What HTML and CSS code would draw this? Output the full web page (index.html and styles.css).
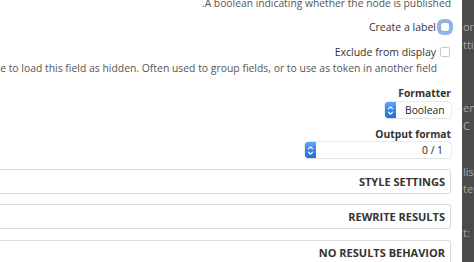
FILE: index.html
```html
<!DOCTYPE html>
<html>
<head>
<meta charset="utf-8">
<link rel="stylesheet" href="styles.css">
</head>
<body>
<div class="page">
  <div class="panel">
    <div class="desc desc-top">.A boolean indicating whether the node is published</div>
    <div class="check-row row-label">
      <span class="check-text">Create a label</span>
      <span class="checkbox focused"></span>
    </div>
    <div class="check-row row-exclude">
      <span class="check-text">Exclude from display</span>
      <span class="checkbox"></span>
    </div>
    <div class="desc desc-small">e to load this field as hidden. Often used to group fields, or to use as token in another field</div>
    <div class="field-label label-formatter">Formatter</div>
    <div class="select-row row-boolean">
      <div class="select select-short">
        <span class="select-arrow">
          <svg width="7" height="11" viewBox="0 0 7 11"><path d="M1.2 4.2 L3.5 1.8 L5.8 4.2 M1.2 6.8 L3.5 9.2 L5.8 6.8" fill="none" stroke="#fff" stroke-width="1.2"/></svg>
        </span>
        <span class="select-value">Boolean</span>
      </div>
    </div>
    <div class="field-label label-output">Output format</div>
    <div class="select-row row-output">
      <div class="select select-long">
        <span class="select-arrow">
          <svg width="7" height="11" viewBox="0 0 7 11"><path d="M1.2 4.2 L3.5 1.8 L5.8 4.2 M1.2 6.8 L3.5 9.2 L5.8 6.8" fill="none" stroke="#fff" stroke-width="1.2"/></svg>
        </span>
        <span class="select-value value-right">0 / 1</span>
      </div>
    </div>
    <div class="fieldset fs-first">STYLE SETTINGS</div>
    <div class="fieldset fs-second">REWRITE RESULTS</div>
    <div class="fieldset fs-third">NO RESULTS BEHAVIOR</div>
  </div>
  <div class="strip">
    <div class="strip-line s1">or</div>
    <div class="strip-line s2">ttin</div>
    <div class="strip-line s3">en</div>
    <div class="strip-line s4">C</div>
    <div class="strip-line s5">lis</div>
    <div class="strip-line s6">ter</div>
    <div class="strip-line s7">t:</div>
  </div>
</div>
</body>
</html>
```
FILE: styles.css
```css
html, body {
  margin: 0;
  padding: 0;
  background: #fff;
}
body {
  width: 474px;
  height: 262px;
  overflow: hidden;
  font-family: "Open Sans", "DejaVu Sans", sans-serif;
  color: #333;
}
.page {
  display: flex;
  width: 474px;
  height: 262px;
  overflow: hidden;
}
.panel {
  width: 462px;
  flex: none;
  overflow: hidden;
  padding-right: 11px;
  box-sizing: border-box;
  display: flex;
  flex-direction: column;
  align-items: flex-end;
}
.desc {
  white-space: nowrap;
  color: #555;
  text-align: right;
}
.desc-top {
  font-size: 10.3px;
  line-height: 14px;
  height: 14px;
  margin-top: -4px;
}
.check-row {
  display: flex;
  align-items: center;
  font-size: 10.5px;
  color: #333;
  white-space: nowrap;
}
.row-label {
  margin-top: 10px;
  height: 16px;
  margin-right: -1px;
}
.row-exclude {
  margin-top: 11px;
  height: 14px;
  margin-right: 1px;
}
.checkbox {
  display: inline-block;
  width: 8px;
  height: 8px;
  border: 1px solid #c8c8c8;
  border-radius: 2px;
  background: #fff;
  margin-left: 4px;
}
.checkbox.focused {
  border: 1px solid #98a8c0;
  box-shadow: 0 0 0 3px #8fb4ee;
  border-radius: 3px;
  margin-left: 4px;
  margin-right: 2px;
}
.desc-small {
  font-size: 10.4px;
  line-height: 14px;
  height: 14px;
  margin-top: 2px;
  margin-right: 14px;
}
.field-label {
  font-weight: bold;
  font-size: 10.3px;
  color: #333;
  line-height: 14px;
  height: 14px;
}
.label-formatter {
  margin-top: 11px;
}
.label-output {
  margin-top: 9px;
}
.select-row {
  display: flex;
  justify-content: flex-end;
}
.row-boolean { margin-top: 2px; }
.row-output { margin-top: 1px; }
.select {
  display: flex;
  height: 16px;
  border-radius: 3px;
  background: #fff;
  box-shadow: 0 0 0 0.5px #d8d8d8, 0 1px 1px rgba(0,0,0,0.07);
  overflow: hidden;
}
.select-short { width: 66px; }
.select-long { width: 146px; }
.select-arrow {
  width: 11px;
  flex: none;
  display: flex;
  align-items: center;
  justify-content: center;
  background: linear-gradient(#5aa3fa, #1f6fe3);
}
.select-value {
  flex: 1;
  font-size: 10.3px;
  line-height: 16px;
  color: #222;
  padding-left: 9px;
}
.value-right {
  text-align: right;
  padding-right: 8px;
}
.fieldset {
  align-self: stretch;
  margin-left: -10px;
  height: 23px;
  border: 1px solid #dcdcdc;
  border-radius: 2px;
  font-weight: bold;
  font-size: 11px;
  line-height: 23px;
  color: #333;
  text-align: right;
  padding-right: 5px;
}
.fs-first { margin-top: 11px; }
.fs-second { margin-top: 10px; }
.fs-third { margin-top: 11px; }
.strip {
  flex: 1;
  background: #4b4b4b;
  overflow: hidden;
  color: #a8a8a8;
  font-size: 11px;
  line-height: 14px;
  white-space: nowrap;
  padding-left: 1px;
}
.strip-line { height: 14px; }
.s1 { margin-top: 20px; }
.s2 { margin-top: 4px; }
.s3 { margin-top: 49px; }
.s4 { margin-top: 4px; }
.s5 { margin-top: 32px; }
.s6 { margin-top: 3px; }
.s7 { margin-top: 30px; }
```
